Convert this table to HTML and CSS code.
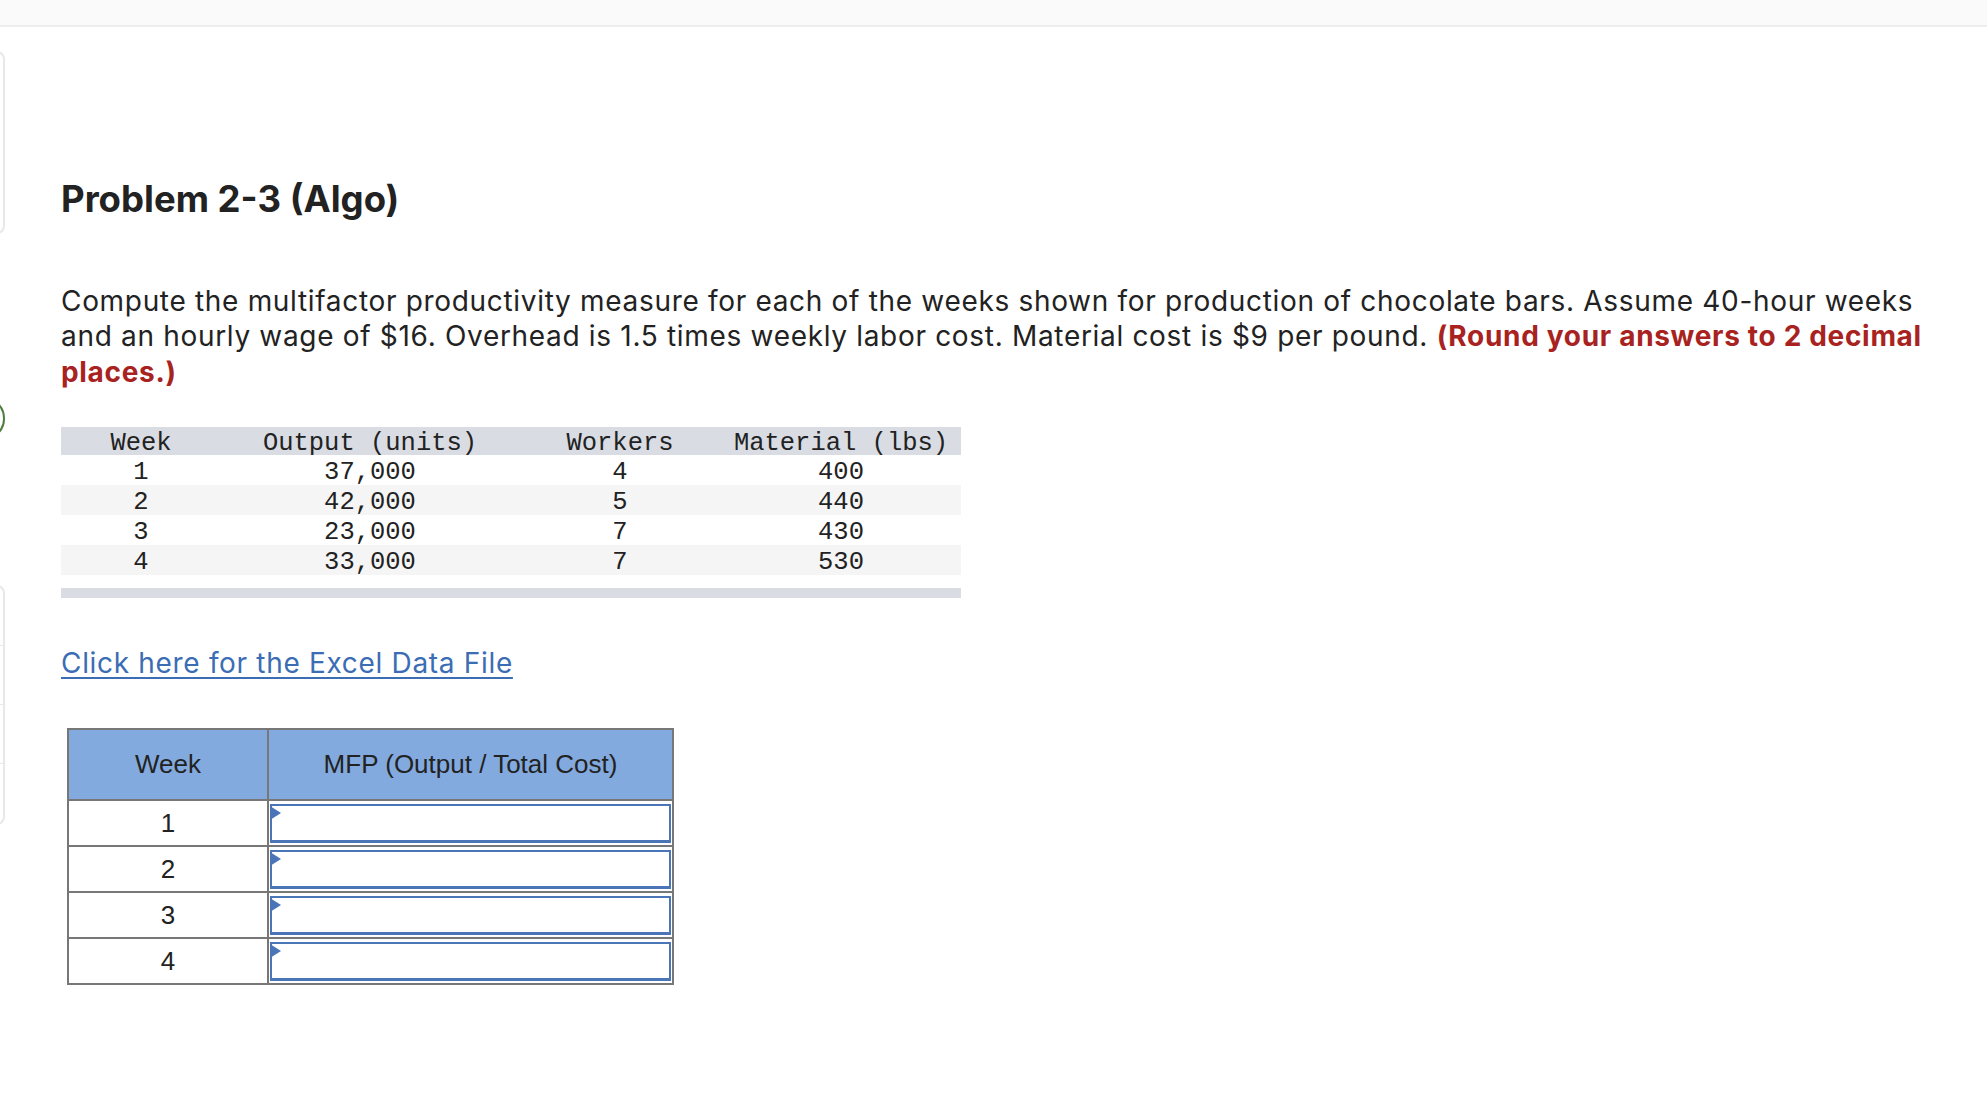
FILE: index.html
```html
<!DOCTYPE html>
<html lang="en">
<head>
<meta charset="utf-8">
<title>Problem 2-3 (Algo)</title>
<link rel="stylesheet" href="styles.css">
</head>
<body>
<div class="topbar"></div>
<div class="layout">
  <aside class="rail">
    <div class="rail-card"></div>
    <div class="rail-pill"></div>
    <div class="rail-list">
      <div class="rail-item"></div>
      <div class="rail-item"></div>
      <div class="rail-item"></div>
      <div class="rail-item"></div>
    </div>
  </aside>
  <main class="content">
    <h1 class="title">Problem 2-3 (Algo)</h1>
    <p class="prompt">Compute the multifactor productivity measure for each of the weeks shown for production of chocolate bars. Assume 40-hour weeks and an hourly wage of $16. Overhead is 1.5 times weekly labor cost. Material cost is $9 per pound. <strong class="hint">(Round your answers to 2 decimal places.)</strong></p>
    <div class="data">
      <table class="data-table">
        <colgroup><col class="c1"><col class="c2"><col class="c3"><col class="c4"></colgroup>
        <thead>
          <tr><th>Week</th><th>Output (units)</th><th>Workers</th><th>Material (lbs)</th></tr>
        </thead>
        <tbody>
          <tr><td>1</td><td>37,000</td><td>4</td><td>400</td></tr>
          <tr><td>2</td><td>42,000</td><td>5</td><td>440</td></tr>
          <tr><td>3</td><td>23,000</td><td>7</td><td>430</td></tr>
          <tr><td>4</td><td>33,000</td><td>7</td><td>530</td></tr>
        </tbody>
      </table>
      <div class="data-rule"></div>
    </div>
    <div class="link-row"><a class="excel-link" href="#">Click here for the Excel Data File</a></div>
    <table class="answer">
      <colgroup><col class="a1"><col class="a2"></colgroup>
      <thead>
        <tr><th>Week</th><th>MFP (Output / Total Cost)</th></tr>
      </thead>
      <tbody>
        <tr><td>1</td><td class="cell-input"><div class="input"></div></td></tr>
        <tr><td>2</td><td class="cell-input"><div class="input"></div></td></tr>
        <tr><td>3</td><td class="cell-input"><div class="input"></div></td></tr>
        <tr><td>4</td><td class="cell-input"><div class="input"></div></td></tr>
      </tbody>
    </table>
  </main>
</div>
</body>
</html>
```

FILE: styles.css
```css
* { box-sizing: border-box; }
body {
  margin: 0;
  background: #fff;
  color: #222;
  font-family: "Inter", "Liberation Sans", sans-serif;
}
.topbar {
  height: 27px;
  background: #fafafa;
  border-bottom: 2px solid #eeeeee;
}
.layout {
  display: flex;
  align-items: flex-start;
}
.rail {
  width: 5px;
  flex: none;
  overflow: hidden;
  display: flex;
  flex-direction: column;
}
.rail-card {
  margin-top: 24px;
  margin-left: -25px;
  width: 30px;
  height: 183px;
  border: 2px solid #e8e8e8;
  border-radius: 8px;
}
.rail-pill {
  margin-top: 163px;
  margin-left: -37px;
  width: 42px;
  height: 43px;
  border: 2px solid #4c7f3c;
  border-radius: 21px;
}
.rail-list {
  margin-top: 145px;
  margin-left: -25px;
  width: 30px;
  border: 2px solid #e8e8e8;
  border-radius: 8px;
}
.rail-item {
  height: 59px;
  border-bottom: 1px solid #e8e8e8;
}
.rail-item:last-child { border-bottom: 0; }

.content {
  flex: 1;
  padding: 0 34px 0 56px;
}
.title {
  margin: 150px 0 0;
  font-size: 36.5px;
  line-height: 44px;
  font-weight: 700;
  color: #222;
}
.prompt {
  margin: 62.5px 0 0;
  font-size: 28px;
  line-height: 35.5px;
  letter-spacing: 0.68px;
  color: #222;
}
.hint {
  color: #a8231f;
  font-weight: 700;
}
.data {
  margin-top: 36.5px;
  width: 900px;
}
.data-table {
  width: 900px;
  border-collapse: collapse;
  table-layout: fixed;
  font-family: "Liberation Mono", "Courier New", monospace;
  font-size: 25.5px;
  color: #222;
}
.data-table .c1 { width: 160px; }
.data-table .c2 { width: 298px; }
.data-table .c3 { width: 202px; }
.data-table .c4 { width: 240px; }
.data-table th {
  background: #d9dce3;
  font-weight: 400;
  padding: 6px 0 0;
  line-height: 22px;
  text-align: center;
}
.data-table td {
  padding: 6px 0 0;
  line-height: 24px;
  text-align: center;
}
.data-table tbody tr:nth-child(even) td { background: #f5f5f5; }
.data-rule {
  margin-top: 13px;
  height: 10px;
  background: #d9dce3;
}
.link-row {
  margin-top: 48px;
  font-size: 28px;
  line-height: 35.5px;
  letter-spacing: 0.68px;
}
.excel-link {
  color: #3b6db4;
  text-decoration: underline;
  text-decoration-thickness: 2px;
  text-underline-offset: 4px;
}
.answer {
  margin: 47px 0 0 6px;
  border-collapse: collapse;
  table-layout: fixed;
  width: 605px;
  border: 2px solid #777;
  font-family: "Liberation Sans", Arial, sans-serif;
  font-size: 26px;
  color: #222;
}
.answer .a1 { width: 200px; }
.answer .a2 { width: 405px; }
.answer th {
  background: #82aade;
  font-weight: 400;
  height: 71px;
  border: 2px solid #777;
  padding: 0;
  text-align: center;
}
.answer td {
  height: 46px;
  border: 2px solid #777;
  padding: 0;
  text-align: center;
}
.answer td.cell-input { padding: 2px 1px 1px 1px; }
.input {
  position: relative;
  height: 39px;
  border: 2px solid #4a76b7;
  border-bottom-width: 3px;
  background: #fff;
}
.input::before {
  content: "";
  position: absolute;
  left: -2px;
  top: 0;
  border-style: solid;
  border-width: 7px 0 7px 11px;
  border-color: transparent transparent transparent #4a76b7;
}
```
